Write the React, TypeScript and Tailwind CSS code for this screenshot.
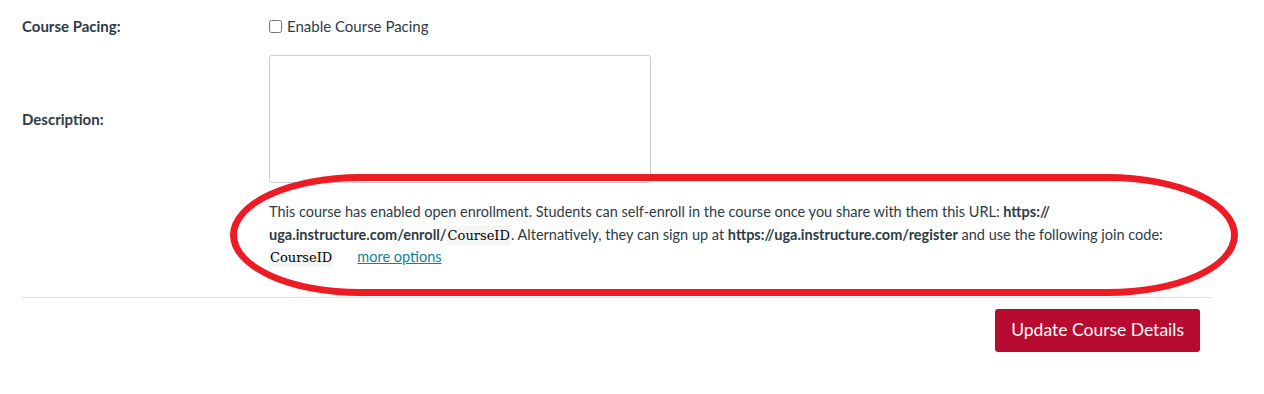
export default function App() {
  return (
    <div className="relative min-h-[394px] w-[1264px] bg-white font-['Lato','Noto_Sans',sans-serif] text-[15px] text-[#2d3b45]">
      <div className="pl-[22px] pr-[52px] pt-[15px]">
        <div className="flex h-[22px] items-center">
          <div className="w-[247px] font-bold">Course Pacing:</div>
          <label className="flex items-center gap-[5px]">
            <input type="checkbox" className="m-0 h-[13px] w-[13px]" />
            <span>Enable Course Pacing</span>
          </label>
        </div>

        <div className="mt-[18px] flex items-center">
          <div className="w-[247px] font-bold">Description:</div>
          <textarea className="block h-[128px] w-[382px] rounded-[3px] border border-[#c7cdd1] bg-white" />
        </div>

        <p className="mt-[18px] pl-[247px] pr-[30px] text-[14.5px] leading-[22.5px]">
          This course has enabled open enrollment. Students can self-enroll in the course once you share with
          them this URL: <b>https://<wbr />uga.instructure.com/enroll/</b>
          <code className="bg-[#f5f5f5] px-[1px] py-[2px] font-['DejaVu_Serif',serif] text-[13px] leading-none text-black">CourseID</code>.
          Alternatively, they can sign up at <b>https://uga.instructure.com/register</b> and use the following
          join code:
          <br />
          <code className="bg-[#f5f5f5] px-[1px] py-[2px] font-['DejaVu_Serif',serif] text-[13px] leading-none text-black">CourseID</code>
          <a href="#" className="ml-[24px] text-[#0e8597] underline">
            more options
          </a>
        </p>

        <div className="mt-[28px] border-t border-[#e0e0e0]" />

        <div className="mt-[11px] flex justify-end pr-[12px]">
          <button className="h-[43px] rounded-[3px] bg-[#b70c2f] px-[16px] text-[17.5px] text-white">
            Update Course Details
          </button>
        </div>
      </div>

      <div className="pointer-events-none absolute left-[230px] top-[174px] h-[122px] w-[1008px] rounded-[130px/61px] border-[7px] border-[#ed1c24]" />
    </div>
  )
}
